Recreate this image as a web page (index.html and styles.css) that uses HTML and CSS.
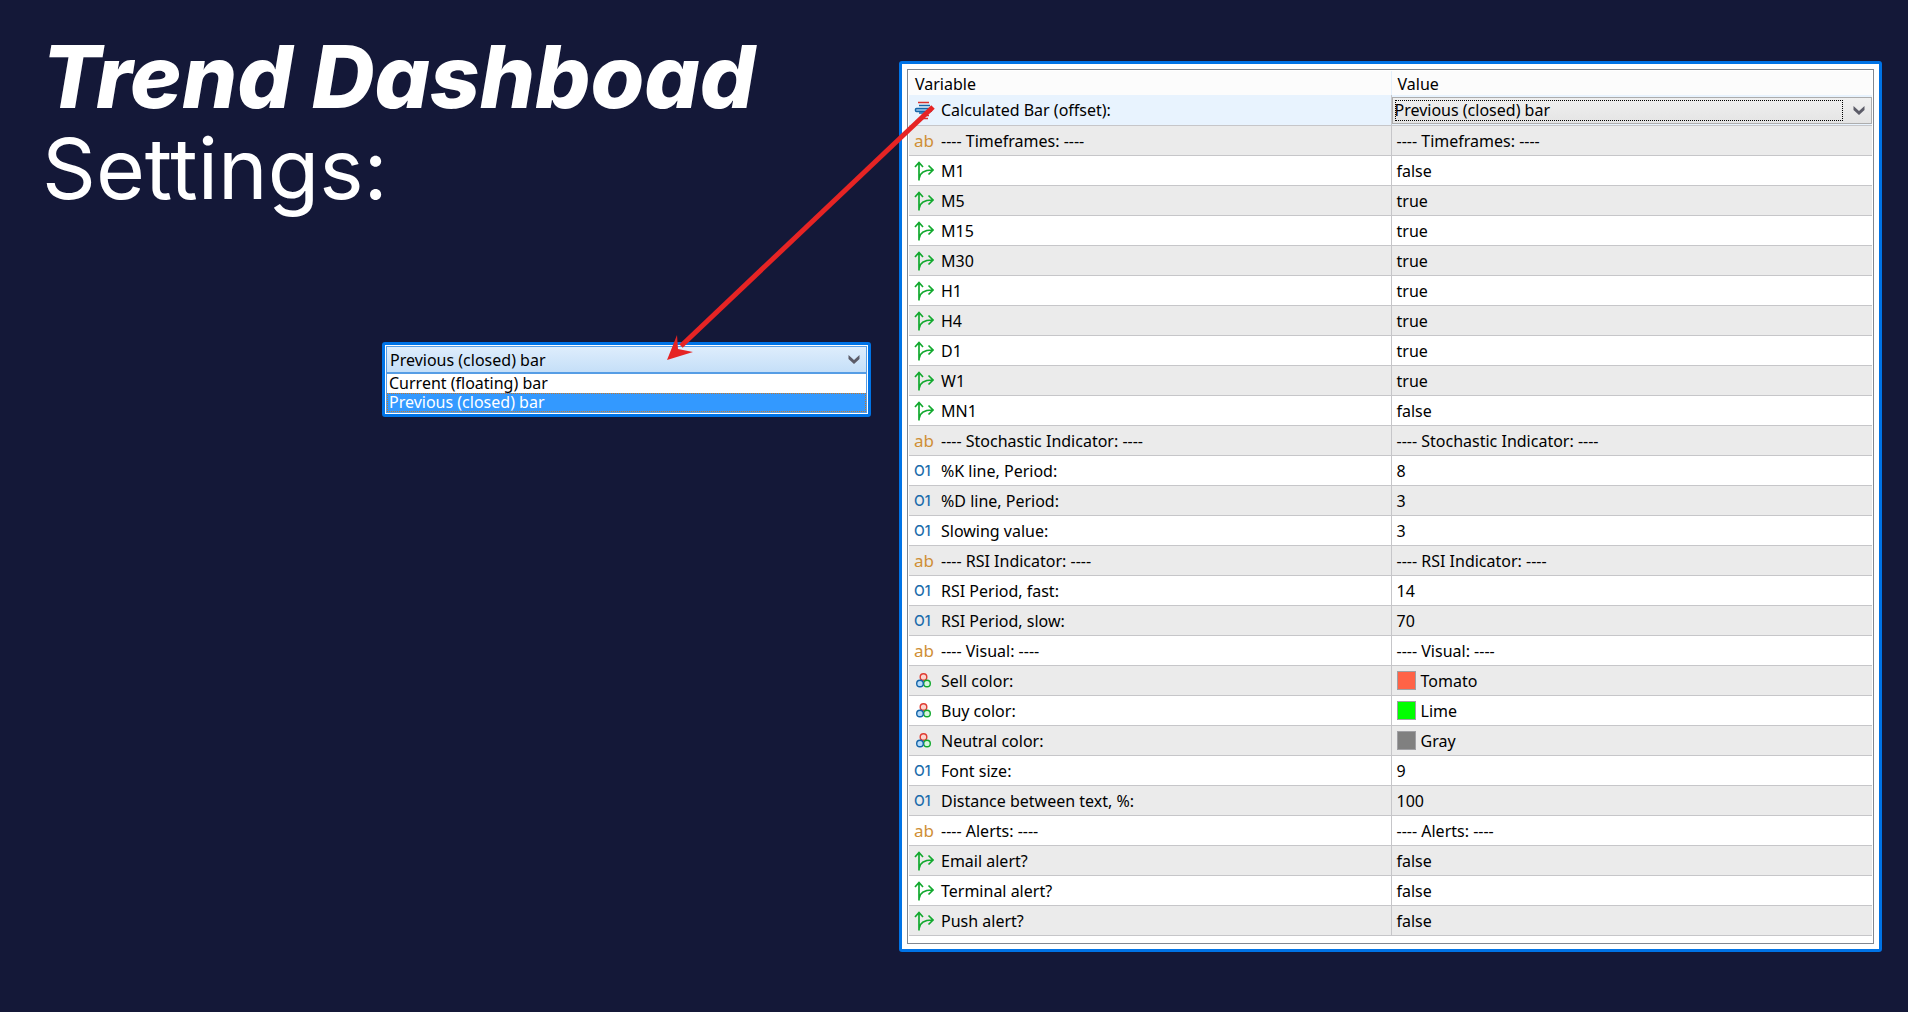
FILE: index.html
```
<!DOCTYPE html>
<html lang="en">
<head>
    <meta charset="UTF-8">
    <meta name="viewport" content="width=device-width, initial-scale=1.0">
    <title>Trend Dashboad Settings</title>
    <link rel="stylesheet" href="styles.css">
</head>
<body>
    <svg class="sprites" aria-hidden="true">
        <symbol id="icon-bool" viewBox="0 0 20 20">
            <path d="M5 19.5V2M1 6l4-4.500 4 4.500M5 17.500C6 11 11 9 18 9M14.500 4.500L19 9l-4.500 4.500" fill="none" stroke="#12a92e" stroke-width="1.700"/>
        </symbol>
        <symbol id="icon-enum" viewBox="0 0 20 20">
            <path d="M4 2.500h11M7 15.500h8M8 18.500h6" stroke="#d8322f" stroke-width="1.300"/>
            <path d="M5 5.500h11M5 13h10" stroke="#1565a8" stroke-width="1.300"/>
            <rect x="1.500" y="8.500" width="16" height="3" rx="1" fill="#9cc8ee" stroke="#1565a8" stroke-width="1.500"/>
        </symbol>
        <symbol id="icon-color" viewBox="0 0 20 20">
            <circle cx="9.500" cy="6" r="3.300" fill="#fbd5cf" stroke="#e03c31" stroke-width="1.400"/>
            <circle cx="13" cy="12.500" r="3.300" fill="#d6f5dc" stroke="#12a92e" stroke-width="1.400"/>
            <circle cx="6" cy="12.500" r="3.300" fill="#b7dcfa" stroke="#1565a8" stroke-width="1.400"/>
        </symbol>
        <symbol id="icon-chevron" viewBox="0 0 12 9">
            <path d="M0.500 0L6 5 11.500 0V4L6 9 0.500 4z" fill="#5c5c68"/>
        </symbol>
    </svg>

    <main class="page">
        <section class="intro">
            <h1 class="title">Trend Dashboad</h1>
            <p class="subtitle">Settings:</p>

            <div class="popup">
                <div class="combo combo-open">
                    <select class="combo-select" aria-label="Calculated Bar">
                        <option>Current (floating) bar</option>
                        <option selected>Previous (closed) bar</option>
                    </select>
                    <svg class="combo-arrow"><use href="#icon-chevron"/></svg>
                </div>
                <ul class="options" role="listbox" aria-label="Calculated Bar options">
                    <li role="option" aria-selected="false">Current (floating) bar</li>
                    <li class="selected" role="option" aria-selected="true">Previous (closed) bar</li>
                </ul>
            </div>
        </section>

        <section class="panel">
            <div class="grid-frame">
                <table class="settings">
                    <thead>
                        <tr><th>Variable</th><th>Value</th></tr>
                    </thead>
                    <tbody>
                        <tr class="active">
                            <td><svg class="icon"><use href="#icon-enum"/></svg><label for="offset">Calculated Bar (offset):</label></td>
                            <td class="combo-cell">
                                <div class="combo">
                                    <select class="combo-select" id="offset">
                                        <option>Current (floating) bar</option>
                                        <option selected>Previous (closed) bar</option>
                                    </select>
                                    <svg class="combo-arrow"><use href="#icon-chevron"/></svg>
                                </div>
                            </td>
                        </tr>
                        <tr><td><span class="icon ab">ab</span>---- Timeframes: ----</td><td>---- Timeframes: ----</td></tr>
                        <tr><td><svg class="icon"><use href="#icon-bool"/></svg>M1</td><td>false</td></tr>
                        <tr><td><svg class="icon"><use href="#icon-bool"/></svg>M5</td><td>true</td></tr>
                        <tr><td><svg class="icon"><use href="#icon-bool"/></svg>M15</td><td>true</td></tr>
                        <tr><td><svg class="icon"><use href="#icon-bool"/></svg>M30</td><td>true</td></tr>
                        <tr><td><svg class="icon"><use href="#icon-bool"/></svg>H1</td><td>true</td></tr>
                        <tr><td><svg class="icon"><use href="#icon-bool"/></svg>H4</td><td>true</td></tr>
                        <tr><td><svg class="icon"><use href="#icon-bool"/></svg>D1</td><td>true</td></tr>
                        <tr><td><svg class="icon"><use href="#icon-bool"/></svg>W1</td><td>true</td></tr>
                        <tr><td><svg class="icon"><use href="#icon-bool"/></svg>MN1</td><td>false</td></tr>
                        <tr><td><span class="icon ab">ab</span>---- Stochastic Indicator: ----</td><td>---- Stochastic Indicator: ----</td></tr>
                        <tr><td><span class="icon num">O1</span>%K line, Period:</td><td>8</td></tr>
                        <tr><td><span class="icon num">O1</span>%D line, Period:</td><td>3</td></tr>
                        <tr><td><span class="icon num">O1</span>Slowing value:</td><td>3</td></tr>
                        <tr><td><span class="icon ab">ab</span>---- RSI Indicator: ----</td><td>---- RSI Indicator: ----</td></tr>
                        <tr><td><span class="icon num">O1</span>RSI Period, fast:</td><td>14</td></tr>
                        <tr><td><span class="icon num">O1</span>RSI Period, slow:</td><td>70</td></tr>
                        <tr><td><span class="icon ab">ab</span>---- Visual: ----</td><td>---- Visual: ----</td></tr>
                        <tr><td><svg class="icon"><use href="#icon-color"/></svg>Sell color:</td><td><span class="swatch tomato"></span>Tomato</td></tr>
                        <tr><td><svg class="icon"><use href="#icon-color"/></svg>Buy color:</td><td><span class="swatch lime"></span>Lime</td></tr>
                        <tr><td><svg class="icon"><use href="#icon-color"/></svg>Neutral color:</td><td><span class="swatch gray"></span>Gray</td></tr>
                        <tr><td><span class="icon num">O1</span>Font size:</td><td>9</td></tr>
                        <tr><td><span class="icon num">O1</span>Distance between text, %:</td><td>100</td></tr>
                        <tr><td><span class="icon ab">ab</span>---- Alerts: ----</td><td>---- Alerts: ----</td></tr>
                        <tr><td><svg class="icon"><use href="#icon-bool"/></svg>Email alert?</td><td>false</td></tr>
                        <tr><td><svg class="icon"><use href="#icon-bool"/></svg>Terminal alert?</td><td>false</td></tr>
                        <tr><td><svg class="icon"><use href="#icon-bool"/></svg>Push alert?</td><td>false</td></tr>
                    </tbody>
                </table>
            </div>

            <!-- pointer from the first row to the opened list -->
            <svg class="pointer" viewBox="0 0 270 260" aria-hidden="true">
                <path d="M266 5L14 244" stroke="#e62424" stroke-width="5"/>
                <path d="M0 258L10 233 11 247 26 250z" fill="#e62424"/>
            </svg>
        </section>
    </main>
</body>
</html>
```
FILE: styles.css
```
* {
    box-sizing: border-box;
}
body {
    margin: 0;
    min-height: 100vh;
    background-color: #141838;
    color: #000;
    font-family: "Noto Sans", sans-serif;
    font-size: 16px;
    line-height: 20px;
}
.sprites {
    position: absolute;
    width: 0;
    height: 0;
}
.page {
    display: grid;
    grid-template-columns: 829fr 983fr;
    column-gap: 28px;
    align-items: start;
    padding: 31px 26px 31px 42px;
}
.title, .subtitle {
    margin: 0;
    color: #fff;
    font-family: Inter, sans-serif;
    line-height: 92px;
    white-space: nowrap;
}
.title {
    font-size: 87px;
    font-style: italic;
    font-weight: 800;
}
.subtitle {
    font-size: 84px;
    font-weight: 400;
}

/* opened drop-down */
.popup {
    width: 489px;
    margin: 127px 0 0 auto;
    padding: 1px;
    border: 3px solid #0073e6;
    border-radius: 3px;
    background-color: #fff;
}
.combo {
    position: relative;
}
.combo-select {
    display: block;
    appearance: none;
    width: 100%;
    height: 27px;
    padding: 0 30px 0 3px;
    border: 1px solid #adadad;
    border-radius: 0;
    background: linear-gradient(#f0f0f0, #e4e4e4);
    color: #000;
    font: inherit;
}
.combo-open .combo-select {
    border-color: #569de5;
    background: linear-gradient(#deedfc, #c5dff8);
}
.combo-arrow {
    position: absolute;
    top: 9px;
    right: 7px;
    width: 12px;
    height: 9px;
    pointer-events: none;
}
.options {
    margin: 0;
    padding: 0;
    border: 1px solid #569de5;
    list-style: none;
    line-height: 19px;
}
.options li {
    padding: 0 2px;
}
.options .selected {
    outline: 1px dotted #c87828;
    outline-offset: -1px;
    background-color: #3399ff;
    color: #fff;
}

/* inputs table */
.panel {
    position: relative;
    margin-top: 30px;
    padding: 5px;
    border: 3px solid #0073e6;
    border-radius: 3px;
    background-color: #fff;
}
.grid-frame {
    padding: 1px 1px 7px;
    border: 1px solid #828790;
}
.settings {
    width: 100%;
    border-collapse: separate;
    border-spacing: 0;
    table-layout: fixed;
}
.settings th {
    height: 24px;
    padding: 2px 6px 0;
    background-color: #fcfcfc;
    font-weight: 400;
    text-align: left;
}
.settings th + th {
    border-left: 1px solid #e5f0fb;
}
.settings th:first-child {
    width: calc(50% - 1px);
}
.settings td {
    height: 30px;
    padding: 0 6px;
    border-bottom: 1px solid #c6c6c9;
    white-space: nowrap;
}
.settings td + td {
    padding-left: 5px;
    border-left: 1px solid #c6c6c9;
}
.settings tbody tr:nth-child(even) {
    background-color: #ebebeb;
}
.settings .active {
    background-color: #e8f3fe;
}
.settings .active td {
    height: 31px;
}
.settings .combo-cell {
    padding: 0;
}
.combo-cell .combo-select {
    padding-left: 2px;
}
.combo-cell .combo::after {
    content: "";
    position: absolute;
    top: 3px;
    right: 29px;
    bottom: 3px;
    left: 3px;
    border: 1px dotted #000;
    pointer-events: none;
}
.icon {
    display: inline-block;
    width: 20px;
    height: 20px;
    margin: 0 7px 0 -1px;
    vertical-align: top;
}
.ab {
    color: #cf8f36;
    font-size: 17px;
}
.num {
    color: #1b6cab;
    font-family: Inter, sans-serif;
    font-size: 14px;
    font-weight: 500;
}
.swatch {
    display: inline-block;
    width: 19px;
    height: 19px;
    margin-right: 5px;
    border: 1px solid #a0a0a4;
    vertical-align: top;
}
.tomato {
    background-color: #ff6347;
}
.lime {
    background-color: #00ff00;
}
.gray {
    background-color: #808080;
}
.pointer {
    position: absolute;
    top: 38px;
    left: -235px;
    width: 270px;
    height: 260px;
    pointer-events: none;
}
```
